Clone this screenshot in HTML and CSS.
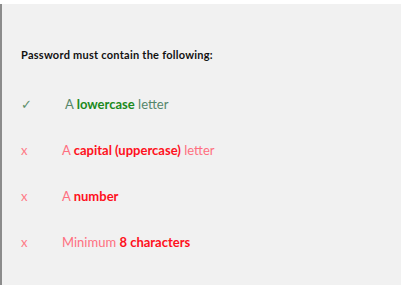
FILE: index.html
```html
<!DOCTYPE html>
<html lang="en">
<head>
<meta charset="utf-8">
<title>Password rules</title>
<link rel="stylesheet" href="styles.css">
</head>
<body>
<div class="top"></div>
<div class="panel">
  <h3 class="title">Password must contain the following:</h3>
  <ul class="rules">
    <li class="rule valid"><span class="mark">✓</span><span class="text">A <b>lowercase</b> letter</span></li>
    <li class="rule invalid"><span class="mark">x</span><span class="text">A <b>capital (uppercase)</b> letter</span></li>
    <li class="rule invalid"><span class="mark">x</span><span class="text">A <b>number</b></span></li>
    <li class="rule invalid"><span class="mark">x</span><span class="text">Minimum <b>8 characters</b></span></li>
  </ul>
</div>
</body>
</html>
```

FILE: styles.css
```css
html, body {
  margin: 0;
  padding: 0;
  background: #ffffff;
}
body {
  font-family: Lato, "Open Sans", "Liberation Sans", sans-serif;
}
.top {
  height: 4px;
  background: #ffffff;
}
.panel {
  height: 281px;
  box-sizing: border-box;
  background: #f1f1f1;
  border-left: 2px solid #8c8c8c;
  padding: 44px 0 0 19px;
}
.title {
  margin: 0;
  font-size: 11px;
  line-height: 13px;
  font-weight: 700;
  letter-spacing: 0.25px;
  color: #111111;
}
.rules {
  list-style: none;
  margin: 0;
  padding: 20px 0 0 0;
}
.rule {
  display: flex;
  align-items: center;
  height: 46px;
  font-size: 13px;
}
.mark {
  width: 41px;
  flex: none;
}
.valid .mark {
  width: 44px;
  color: #5d8f6b;
}
.invalid .mark {
  color: #ff7a86;
}
.valid .text {
  color: #55866a;
}
.valid .text b {
  color: #1c8a1c;
}
.invalid .text {
  color: #ff6f80;
}
.invalid .text b {
  color: #ff1020;
}
b {
  font-weight: 700;
}
```
